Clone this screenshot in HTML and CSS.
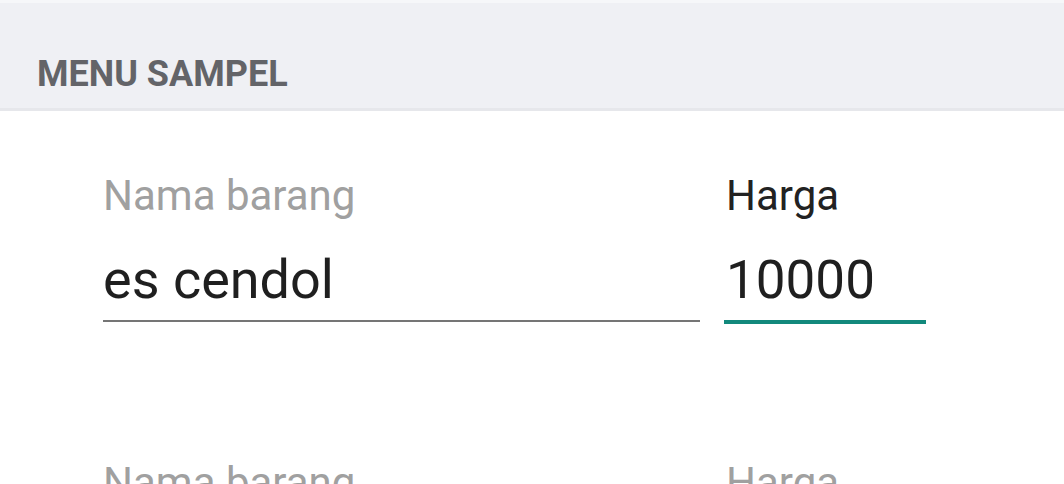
FILE: index.html
```html
<!DOCTYPE html>
<html>
<head>
<meta charset="utf-8">
<link rel="stylesheet" href="styles.css">
</head>
<body>
<header class="section-header">
  <h1 class="section-title">MENU SAMPEL</h1>
</header>
<main class="form">
  <div class="row">
    <div class="field field-name">
      <div class="label">Nama barang</div>
      <div class="value">es cendol</div>
    </div>
    <div class="field field-price focused">
      <div class="label">Harga</div>
      <div class="value">10000</div>
    </div>
  </div>
  <div class="row">
    <div class="field field-name">
      <div class="label">Nama barang</div>
      <div class="value">&nbsp;</div>
    </div>
    <div class="field field-price">
      <div class="label">Harga</div>
      <div class="value">&nbsp;</div>
    </div>
  </div>
</main>
</body>
</html>
```

FILE: styles.css
```css
html, body {
  margin: 0;
  padding: 0;
  background: #ffffff;
  font-family: Roboto, "Noto Sans", Arial, sans-serif;
  overflow: hidden;
}

.section-header {
  background: #eff0f4;
  border-top: 3px solid #f6f7f9;
  border-bottom: 3px solid #e6e7eb;
  padding: 49px 0 12px 37px;
}

.section-title {
  margin: 0;
  font-size: 36px;
  line-height: 44px;
  font-weight: 700;
  color: #636468;
}

.form {
  padding: 60px 0 0 103px;
}

.row {
  display: flex;
  align-items: flex-start;
  gap: 24px;
  margin-bottom: 134px;
}

.field-name {
  width: 597px;
}

.field-price {
  width: 202px;
}

.label {
  font-size: 42px;
  line-height: 50px;
  color: #a0a0a0;
  margin-bottom: 27px;
}

.field-price .label,
.field-price .value {
  padding-left: 2px;
}

.value {
  font-size: 53px;
  line-height: 64px;
  color: #1f1f1f;
  padding-bottom: 8px;
  border-bottom: 2px solid #757575;
}

.field-name .value {
  font-size: 54px;
}

.field-price.focused .label {
  color: #222222;
}

.field-price.focused .value {
  border-bottom: 4px solid #12897c;
}
```
